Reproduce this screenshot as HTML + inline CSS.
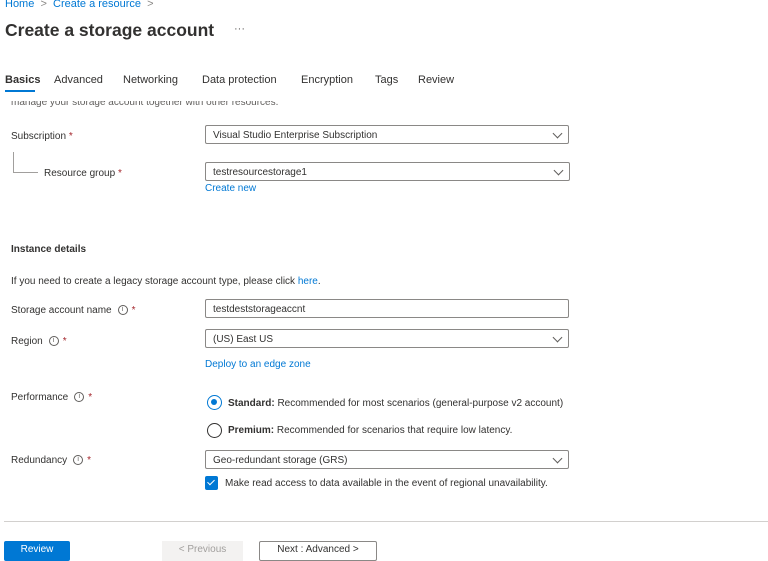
<!DOCTYPE html>
<html><head><style>
*{margin:0;padding:0;box-sizing:border-box}
body{width:768px;height:553px;overflow:hidden;background:#fff;font-family:"Liberation Sans",sans-serif;color:#323130;position:relative;font-size:10px}
.a{position:absolute;white-space:nowrap}
.blue{color:#0078d4}
.req{color:#a4262c}
.box{position:absolute;border:1px solid #8a8886;border-radius:2px;background:#fff;font-size:10px;padding-left:7px;padding-top:1px;display:flex;align-items:center;color:#323130}
.chev{position:absolute;right:7px;top:4px;width:7px;height:7px;border-right:1px solid #605e5c;border-bottom:1px solid #605e5c;transform:rotate(45deg)}
.info{display:inline-block;width:10px;height:10px;border:1px solid #605e5c;border-radius:50%;font-size:7px;line-height:8px;text-align:center;vertical-align:middle;margin:0 4px 0 6px;color:#605e5c}
.tab{position:absolute;top:74px;font-size:11px;color:#323130}
</style></head><body>
<div class="a blue" style="left:5px;top:-2px;font-size:11px">Home <span style="color:#8a8886">&nbsp;&gt;&nbsp;</span> Create a resource <span style="color:#8a8886">&nbsp;&gt;</span></div>
<div class="a" style="left:5px;top:20px;font-size:17.5px;font-weight:bold;color:#323130">Create a storage account</div>
<div class="a" style="left:234px;top:23px;font-size:11px;color:#605e5c">···</div>

<div class="tab" style="left:5px;font-weight:bold">Basics</div>
<div class="a" style="left:5px;top:90px;width:30px;height:2px;background:#0078d4"></div>
<div class="tab" style="left:54px">Advanced</div>
<div class="tab" style="left:123px">Networking</div>
<div class="tab" style="left:202px">Data protection</div>
<div class="tab" style="left:301px">Encryption</div>
<div class="tab" style="left:375px">Tags</div>
<div class="tab" style="left:418px">Review</div>

<div class="a" style="left:11px;top:101px;font-size:10px;height:12px;overflow:hidden;color:#605e5c"><div style="margin-top:-4px">manage your storage account together with other resources.</div></div>

<div class="a" style="left:11px;top:131px">Subscription <span class="req">*</span></div>
<div class="box" style="left:205px;top:125px;width:364px;height:19px">Visual Studio Enterprise Subscription<div class="chev"></div></div>
<div class="a" style="left:13px;top:152px;width:1px;height:21px;background:#a19f9d"></div>
<div class="a" style="left:13px;top:172px;width:25px;height:1px;background:#a19f9d"></div>
<div class="a" style="left:44px;top:168px">Resource group <span class="req">*</span></div>
<div class="box" style="left:205px;top:162px;width:365px;height:19px">testresourcestorage1<div class="chev"></div></div>
<div class="a blue" style="left:205px;top:183px">Create new</div>

<div class="a" style="left:11px;top:244px;font-weight:bold">Instance details</div>
<div class="a" style="left:11px;top:276px">If you need to create a legacy storage account type, please click <span class="blue">here</span>.</div>

<div class="a" style="left:11px;top:305px">Storage account name<span class="info">i</span><span class="req">*</span></div>
<div class="box" style="left:205px;top:299px;width:364px;height:19px">testdeststorageaccnt</div>
<div class="a" style="left:11px;top:336px">Region<span class="info">i</span><span class="req">*</span></div>
<div class="box" style="left:205px;top:329px;width:364px;height:19px">(US) East US<div class="chev"></div></div>
<div class="a blue" style="left:205px;top:359px">Deploy to an edge zone</div>

<div class="a" style="left:11px;top:392px">Performance<span class="info">i</span><span class="req">*</span></div>
<div class="a" style="left:207px;top:395px;width:15px;height:15px;border:1.5px solid #0078d4;border-radius:50%"><div style="position:absolute;left:3px;top:3px;width:6px;height:6px;border-radius:50%;background:#0078d4"></div></div>
<div class="a" style="left:228px;top:398px"><b>Standard:</b> Recommended for most scenarios (general-purpose v2 account)</div>
<div class="a" style="left:207px;top:423px;width:15px;height:15px;border:1.5px solid #323130;border-radius:50%"></div>
<div class="a" style="left:228px;top:425px"><b>Premium:</b> Recommended for scenarios that require low latency.</div>

<div class="a" style="left:11px;top:455px">Redundancy<span class="info">i</span><span class="req">*</span></div>
<div class="box" style="left:205px;top:450px;width:364px;height:19px">Geo-redundant storage (GRS)<div class="chev"></div></div>
<div class="a" style="left:205px;top:476px;width:13px;height:14px;background:#0078d4;border-radius:2px"><div style="position:absolute;left:4px;top:2px;width:4px;height:7px;border-right:1px solid #fff;border-bottom:1px solid #fff;transform:rotate(45deg)"></div></div>
<div class="a" style="left:225px;top:478px">Make read access to data available in the event of regional unavailability.</div>

<div class="a" style="left:4px;top:521px;width:764px;height:1px;background:#d2d0ce"></div>
<div class="a" style="left:4px;top:541px;width:66px;height:20px;background:#0078d4;border-radius:2px;color:#fff;text-align:center;line-height:18px">Review</div>
<div class="a" style="left:162px;top:541px;width:81px;height:20px;background:#f3f2f1;color:#a19f9d;text-align:center;line-height:18px">&lt; Previous</div>
<div class="a" style="left:259px;top:541px;width:118px;height:20px;border:1px solid #8a8886;border-radius:2px;text-align:center;line-height:16px;color:#323130">Next : Advanced &gt;</div>
</body></html>
